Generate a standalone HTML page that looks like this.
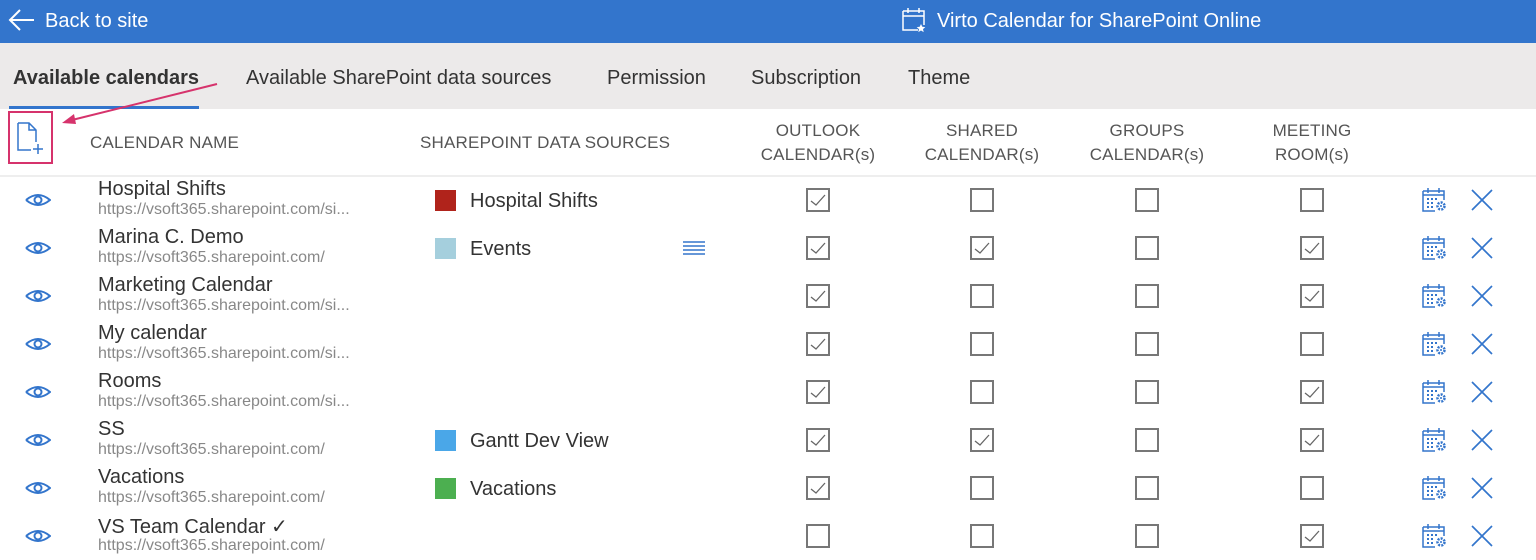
<!DOCTYPE html>
<html><head><meta charset="utf-8"><style>
*{margin:0;padding:0;box-sizing:border-box}
body{width:1536px;height:560px;overflow:hidden;background:#fff;font-family:"Liberation Sans",sans-serif;position:relative;color:#333}
.a{position:absolute;white-space:nowrap}
.top{left:0;top:0;width:1536px;height:43px;background:#3375cc}
.tabs{left:0;top:43px;width:1536px;height:66px;background:#eceaea}
.tab{top:67px;font-size:20px;color:#333}
.hd{font-size:17px;color:#555;text-align:center;line-height:24px;letter-spacing:.2px}
.nm{font-size:20px;color:#333;left:98px}
.url{font-size:16px;color:#888;left:98px}
.cb{width:24px;height:24px;border:2px solid #777}
.cb svg{position:absolute;left:2px;top:3px}
.sw{width:21px;height:21px}
.ds{font-size:20px;color:#333;left:470px}
</style></head><body>
<div class="a top"></div>
<svg class="a" style="left:8px;top:8px" width="28" height="24" viewBox="0 0 28 24"><path d="M12 2 L2 12 L12 22 M2 12 H26" stroke="#fff" stroke-width="2" fill="none"/></svg>
<div class="a" style="left:45px;top:10px;font-size:20px;color:#fff">Back to site</div>
<svg class="a" style="left:901px;top:7px" width="26" height="26" viewBox="0 0 26 26"><path d="M2 4 H23 V18 M2 4 V23 H17 M2 9 H23 M7 1 V6 M18 1 V6" stroke="#fff" stroke-width="1.5" fill="none"/><path d="M20 17 l1.3 2.8 3 .3 -2.3 2 .7 3 -2.7-1.6 -2.7 1.6 .7-3 -2.3-2 3-.3z" fill="#fff"/></svg>
<div class="a" style="left:937px;top:10px;font-size:20px;color:#fff">Virto Calendar for SharePoint Online</div>
<div class="a tabs"></div>
<div class="a tab" style="left:13px;font-weight:bold">Available calendars</div>
<div class="a" style="left:9px;top:106px;width:190px;height:3px;background:#3375cc"></div>
<div class="a tab" style="left:246px">Available SharePoint data sources</div>
<div class="a tab" style="left:607px">Permission</div>
<div class="a tab" style="left:751px">Subscription</div>
<div class="a tab" style="left:908px">Theme</div>
<div class="a" style="left:8px;top:111px;width:45px;height:53px;border:2px solid #d6336c"></div>
<svg class="a" style="left:16px;top:121px" width="30" height="34" viewBox="0 0 30 34"><path d="M2 2 H13 L20 9 V21 M2 2 V29 H15 M13 2 V9 H20" stroke="#3375cc" stroke-width="1.5" fill="none"/><path d="M22 23 V33 M17 28 H27" stroke="#3375cc" stroke-width="1.5"/></svg>
<svg class="a" style="left:60px;top:82px" width="160" height="45" viewBox="0 0 160 45"><path d="M157 2 L12 38" stroke="#d6336c" stroke-width="2"/><path d="M2 41 L14 32 L16 42 Z" fill="#d6336c"/></svg>
<div class="a hd" style="left:90px;top:131px">CALENDAR NAME</div>
<div class="a hd" style="left:420px;top:131px">SHAREPOINT DATA SOURCES</div>
<div class="a hd" style="left:738px;top:119px;width:160px">OUTLOOK<br>CALENDAR(s)</div>
<div class="a hd" style="left:902px;top:119px;width:160px">SHARED<br>CALENDAR(s)</div>
<div class="a hd" style="left:1067px;top:119px;width:160px">GROUPS<br>CALENDAR(s)</div>
<div class="a hd" style="left:1232px;top:119px;width:160px">MEETING<br>ROOM(s)</div>
<div class="a" style="left:0;top:175px;width:1536px;height:2px;background:#eee"></div>
<div id="rows"></div>
<script>
var R=[["Hospital Shifts","https://vsoft365.sharepoint.com/si...",[1,0,0,0]],
["Marina C. Demo","https://vsoft365.sharepoint.com/",[1,1,0,1]],
["Marketing Calendar","https://vsoft365.sharepoint.com/si...",[1,0,0,1]],
["My calendar","https://vsoft365.sharepoint.com/si...",[1,0,0,0]],
["Rooms","https://vsoft365.sharepoint.com/si...",[1,0,0,1]],
["SS","https://vsoft365.sharepoint.com/",[1,1,0,1]],
["Vacations","https://vsoft365.sharepoint.com/",[1,0,0,0]],
["VS Team Calendar \u2713","https://vsoft365.sharepoint.com/",[0,0,0,1]]];
var ds={0:["#b0231b","Hospital Shifts"],1:["#a5cfdd","Events"],5:["#4aa7e8","Gantt Dev View"],6:["#4caf50","Vacations"]};
var X=[818,982,1147,1312],h="";
R.forEach(function(r,i){var c=200+48*i;
h+='<svg class="a" style="left:25px;top:'+(c-7)+'px" width="26" height="14" viewBox="0 0 26 14"><path d="M1 7 Q13 -3 25 7 Q13 17 1 7" stroke="#3375cc" stroke-width="2" fill="none"/><circle cx="13" cy="7" r="3.5" stroke="#3375cc" stroke-width="2" fill="none"/></svg>';
h+='<div class="a nm" style="top:'+(c-22)+'px">'+r[0]+'</div><div class="a url" style="top:'+(c+1)+'px">'+r[1]+'</div>';
if(ds[i]){h+='<div class="a sw" style="left:435px;top:'+(c-10)+'px;background:'+ds[i][0]+'"></div><div class="a ds" style="top:'+(c-10)+'px">'+ds[i][1]+'</div>';}
if(i==1)h+='<svg class="a" style="left:683px;top:'+(c-8)+'px" width="22" height="16"><path d="M0 2H22M0 6H22M0 10H22M0 14H22" stroke="#3375cc" stroke-width="1.5"/></svg>';
r[2].forEach(function(v,j){h+='<div class="a cb" style="left:'+(X[j]-12)+'px;top:'+(c-12)+'px">'+(v?'<svg width="16" height="14" viewBox="0 0 16 14"><path d="M1 8 L6 12 L15 2" stroke="#666" stroke-width="1.3" fill="none"/></svg>':'')+'</div>';});
h+='<svg class="a" style="left:1422px;top:'+(c-13)+'px" width="26" height="26" viewBox="0 0 26 26"><path d="M1 4H22V13M1 4V24H13M1 8H22M6 1V6M17 1V6" stroke="#3375cc" stroke-width="1.5" fill="none"/><g fill="#3375cc"><rect x="5" y="11" width="2" height="2"/><rect x="9" y="11" width="2" height="2"/><rect x="13" y="11" width="2" height="2"/><rect x="5" y="15" width="2" height="2"/><rect x="9" y="15" width="2" height="2"/><rect x="5" y="19" width="2" height="2"/><rect x="9" y="19" width="2" height="2"/></g><circle cx="19" cy="19" r="3.5" stroke="#3375cc" stroke-width="2.5" fill="none" stroke-dasharray="2 1.2"/><circle cx="19" cy="19" r="1" fill="#3375cc"/></svg>';
h+='<svg class="a" style="left:1471px;top:'+(c-11)+'px" width="22" height="22"><path d="M1 1L21 21M21 1L1 21" stroke="#3375cc" stroke-width="1.7"/></svg>';
});
document.getElementById('rows').innerHTML=h;
</script>
</body></html>
